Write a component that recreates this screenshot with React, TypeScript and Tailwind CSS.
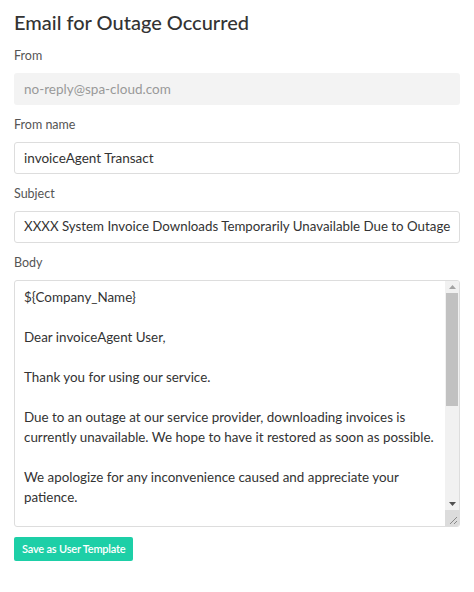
import React from "react";

const font = { fontFamily: 'Lato, "Noto Sans", sans-serif' };

function Label({ children }: { children: React.ReactNode }) {
  return <div className="h-5 mb-[7px] text-[12.5px] leading-5 text-[#555]">{children}</div>;
}

export default function App() {
  const body = [
    "${Company_Name}",
    "",
    "Dear invoiceAgent User,",
    "",
    "Thank you for using our service.",
    "",
    "Due to an outage at our service provider, downloading invoices is currently unavailable. We hope to have it restored as soon as possible.",
    "",
    "We apologize for any inconvenience caused and appreciate your patience.",
    "",
    "Sincerely,",
    "invoiceAgent Support",
  ];
  return (
    <div className="w-[474px] h-[592px] bg-white px-[14px] pt-[8px] text-[#333]" style={font}>
      <h1 className="h-7 mb-[10px] text-[20px] leading-7 font-medium text-[#333]">Email for Outage Occurred</h1>
      <div className="flex flex-col gap-[10px]">
        <div>
          <Label>From</Label>
          <div className="h-8 rounded-[3px] bg-[#f3f3f3] px-[10px] flex items-center text-[13.5px] text-[#999]">no-reply@spa-cloud.com</div>
        </div>
        <div>
          <Label>From name</Label>
          <div className="h-8 rounded-[3px] border border-[#ddd] px-[9px] flex items-center text-[13.5px] text-[#333]">invoiceAgent Transact</div>
        </div>
        <div>
          <Label>Subject</Label>
          <div className="h-8 rounded-[3px] border border-[#ddd] px-[9px] flex items-center text-[13.3px] text-[#333] whitespace-nowrap overflow-hidden">
            XXXX System Invoice Downloads Temporarily Unavailable Due to Outage
          </div>
        </div>
        <div>
          <Label>Body</Label>
          <div className="h-[247px] rounded-[3px] border border-[#ddd] flex overflow-hidden">
            <div className="flex-1 overflow-hidden pl-[9px] pr-[8px] pt-[6px] text-[13.4px] leading-5 text-[#333]">
              {body.map((l, i) => (
                <div key={i} className="min-h-5">{l}</div>
              ))}
            </div>
            <div className="w-[14px] flex flex-col bg-[#f1f1f1]">
              <div className="h-[12px] flex items-center justify-center">
                <svg width="7" height="4" viewBox="0 0 7 4"><polygon points="3.5,0 7,4 0,4" fill="#a3a3a3" /></svg>
              </div>
              <div className="mx-[1px] h-[113px] bg-[#c1c1c1]" />
              <div className="flex-1" />
              <div className="h-[12px] flex items-center justify-center">
                <svg width="7" height="4" viewBox="0 0 7 4"><polygon points="0,0 7,0 3.5,4" fill="#505050" /></svg>
              </div>
              <div className="h-[16px] bg-[#dcdcdc] flex items-end justify-end p-[2px]">
                <svg width="8" height="8" viewBox="0 0 8 8"><line x1="8" y1="1" x2="1" y2="8" stroke="#888" strokeWidth="1" /><line x1="8" y1="5" x2="5" y2="8" stroke="#888" strokeWidth="1" /></svg>
              </div>
            </div>
          </div>
        </div>
      </div>
      <div className="mt-[10px] flex">
        <button
          className="h-6 px-[8px] rounded-[2px] bg-[#1dcfa7] text-white text-[11px] leading-6 font-semibold whitespace-nowrap tracking-[-0.2px]"
          style={{ fontFamily: 'Lato, "Noto Sans", sans-serif' }}
        >
          Save as User Template
        </button>
      </div>
    </div>
  );
}
